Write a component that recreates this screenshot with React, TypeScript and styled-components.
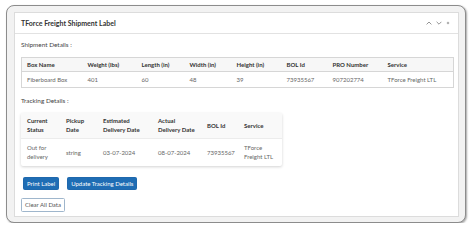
import * as React from 'react';
import styled, { createGlobalStyle } from 'styled-components';

const GlobalStyle = createGlobalStyle`
  html, body {
    margin: 0;
    padding: 0;
    background: #ffffff;
  }
  body {
    font-family: Lato, 'Open Sans', sans-serif;
    color: #333;
  }
`;

const Frame = styled.div`
  margin: 5px 0 0 6px;
  width: 460px;
  height: 218px;
  box-sizing: border-box;
  border: 1.5px solid #8c8c8c;
  border-radius: 8px;
  background: #f2f2f2;
  box-shadow: 1px 1px 2px rgba(0, 0, 0, 0.35);
  padding: 6px 6px 5px 7px;
`;

const Panel = styled.div`
  height: 100%;
  box-sizing: border-box;
  background: #fff;
  border: 1px solid #dcdcdc;
  display: flex;
  flex-direction: column;
`;

const PanelHeader = styled.div`
  height: 20px;
  flex-shrink: 0;
  display: flex;
  align-items: center;
  justify-content: space-between;
  padding: 0 8px 0 6px;
  border-bottom: 1px solid #e2e2e2;
`;

const Title = styled.span`
  font-size: 7px;
  font-weight: 700;
  color: #333;
`;

const HeaderIcons = styled.div`
  display: flex;
  align-items: center;
  gap: 4px;
  color: #888;
`;

const PanelBody = styled.div`
  padding: 6px 5px 0 6px;
  display: flex;
  flex-direction: column;
  align-items: flex-start;
`;

const SectionLabel = styled.div<{ $gap?: number }>`
  margin-top: ${({ $gap }) => $gap ?? 0}px;
  font-size: 6.4px;
  color: #444;
  height: 10px;
  line-height: 10px;
`;

const ShipTable = styled.table`
  margin-top: 7px;
  width: 433px;
  border-collapse: collapse;
  table-layout: fixed;
  border: 1px solid #d6d6d6;
  font-size: 6px;
`;

const ShipTh = styled.th<{ $w?: number }>`
  box-sizing: border-box;
  width: ${({ $w }) => ($w ? `${$w}px` : 'auto')};
  height: 14px;
  padding: 0 0 0 5px;
  text-align: left;
  font-weight: 700;
  color: #333;
  background: #f7f7f7;
  border-bottom: 1px solid #d6d6d6;
  white-space: nowrap;
`;

const ShipTd = styled.td`
  height: 15px;
  padding: 0 0 0 5px;
  color: #666;
  white-space: nowrap;
`;

const TrackCard = styled.div`
  margin-top: 7px;
  width: 261px;
  background: #fff;
  box-shadow: 0 1px 3px rgba(0, 0, 0, 0.18);
  border-radius: 2px;
`;

const TrackTable = styled.table`
  width: 100%;
  border-collapse: collapse;
  table-layout: fixed;
  font-size: 6px;
`;

const TrackTh = styled.th<{ $w?: number }>`
  box-sizing: border-box;
  width: ${({ $w }) => ($w ? `${$w}px` : 'auto')};
  height: 25px;
  padding: 0 0 0 6px;
  text-align: left;
  vertical-align: middle;
  font-weight: 700;
  line-height: 9px;
  color: #333;
  background: #f9f9f9;
  border-bottom: 1px solid #ececec;
`;

const TrackTd = styled.td`
  height: 27px;
  padding: 0 0 0 6px;
  line-height: 9px;
  color: #666;
  vertical-align: middle;
`;

const ButtonRow = styled.div`
  margin-top: 11px;
  display: flex;
  gap: 8px;
  padding-left: 2px;
`;

const Button = styled.button<{ $outline?: boolean }>`
  font-family: inherit;
  font-size: 6px;
  height: 13.5px;
  padding: 0 3px;
  border-radius: 1.5px;
  cursor: pointer;
  border: 1px solid ${({ $outline }) => ($outline ? '#9fb6cc' : '#1f68ad')};
  background: ${({ $outline }) => ($outline ? '#fff' : '#1f6db4')};
  color: ${({ $outline }) => ($outline ? '#555' : '#fff')};
`;

const ClearRow = styled.div`
  margin-top: 8px;
  display: flex;
`;

const Chevron: React.FC<{ up?: boolean }> = ({ up }) => (
  <svg width="6" height="4" viewBox="0 0 6 4">
    <path
      d={up ? 'M0.6 3.4 L3 1 L5.4 3.4' : 'M0.6 0.8 L3 3.2 L5.4 0.8'}
      fill="none"
      stroke="#888"
      strokeWidth="0.9"
    />
  </svg>
);

const Dot = () => (
  <svg width="4" height="4" viewBox="0 0 4 4">
    <path d="M2 0.8 V3.2 M0.8 2 H3.2" stroke="#888" strokeWidth="0.8" />
  </svg>
);

const shipCols = [
  { label: 'Box Name', w: 61 },
  { label: 'Weight (lbs)', w: 54 },
  { label: 'Length (in)', w: 48 },
  { label: 'Width (in)', w: 47 },
  { label: 'Height (in)', w: 50 },
  { label: 'BOL Id', w: 46 },
  { label: 'PRO Number', w: 55 },
  { label: 'Service' },
];

const shipRow = [
  'Fiberboard Box',
  '401',
  '60',
  '48',
  '39',
  '73935567',
  '907202774',
  'TForce Freight LTL',
];

const trackCols = [
  { label: ['Current', 'Status'], w: 39 },
  { label: ['Pickup', 'Date'], w: 37 },
  { label: ['Estimated', 'Delivery Date'], w: 55 },
  { label: ['Actual', 'Delivery Date'], w: 49 },
  { label: ['BOL Id'], w: 37 },
  { label: ['Service'] },
];

const trackRow = [
  ['Out for', 'delivery'],
  ['string'],
  ['03-07-2024'],
  ['08-07-2024'],
  ['73935567'],
  ['TForce', 'Freight LTL'],
];

const Lines: React.FC<{ lines: string[] }> = ({ lines }) => (
  <>
    {lines.map((l, i) => (
      <React.Fragment key={i}>
        {i > 0 && <br />}
        {l}
      </React.Fragment>
    ))}
  </>
);

const App: React.FC = () => (
  <>
    <GlobalStyle />
    <Frame>
      <Panel>
        <PanelHeader>
          <Title>TForce Freight Shipment Label</Title>
          <HeaderIcons>
            <Chevron up />
            <Chevron />
            <Dot />
          </HeaderIcons>
        </PanelHeader>
        <PanelBody>
          <SectionLabel>Shipment Details :</SectionLabel>
          <ShipTable>
            <thead>
              <tr>
                {shipCols.map((c) => (
                  <ShipTh key={c.label} $w={c.w}>
                    {c.label}
                  </ShipTh>
                ))}
              </tr>
            </thead>
            <tbody>
              <tr>
                {shipRow.map((v, i) => (
                  <ShipTd key={i}>{v}</ShipTd>
                ))}
              </tr>
            </tbody>
          </ShipTable>

          <SectionLabel $gap={8}>Tracking Details :</SectionLabel>
          <TrackCard>
            <TrackTable>
              <thead>
                <tr>
                  {trackCols.map((c, i) => (
                    <TrackTh key={i} $w={c.w}>
                      <Lines lines={c.label} />
                    </TrackTh>
                  ))}
                </tr>
              </thead>
              <tbody>
                <tr>
                  {trackRow.map((v, i) => (
                    <TrackTd key={i}>
                      <Lines lines={v} />
                    </TrackTd>
                  ))}
                </tr>
              </tbody>
            </TrackTable>
          </TrackCard>

          <ButtonRow>
            <Button>Print Label</Button>
            <Button>Update Tracking Details</Button>
          </ButtonRow>
          <ClearRow>
            <Button $outline>Clear All Data</Button>
          </ClearRow>
        </PanelBody>
      </Panel>
    </Frame>
  </>
);

export default App;
